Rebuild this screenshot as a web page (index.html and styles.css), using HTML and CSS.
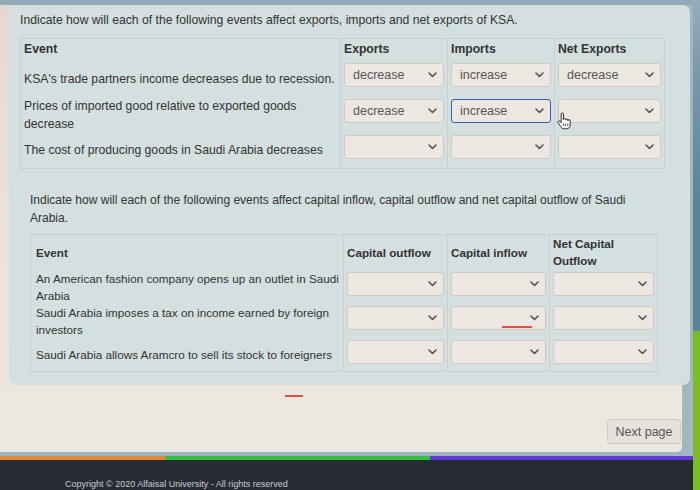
FILE: index.html
```html
<!DOCTYPE html>
<html>
<head>
<meta charset="utf-8">
<link rel="stylesheet" href="styles.css">
</head>
<body>
<div class="screen">
  <div class="main">
    <div class="topbar"></div>
    <div class="content">
      <div class="panel">
        <p class="q q1">Indicate how will each of the following events affect exports, imports and net exports of KSA.</p>
        <table class="grid g1">
          <colgroup><col class="c-ev1"><col class="c-a1"><col class="c-b1"><col class="c-c1"></colgroup>
          <thead>
            <tr><th>Event</th><th>Exports</th><th>Imports</th><th>Net Exports</th></tr>
          </thead>
          <tbody>
            <tr>
              <td class="ev nowrap">KSA's trade partners income decreases due to recession.</td>
              <td class="ch"><div class="sel"><span>decrease</span><svg class="chev" width="9" height="6" viewBox="0 0 9 6"><polyline points="1,1 4.5,4.5 8,1"/></svg></div></td>
              <td class="ch"><div class="sel"><span>increase</span><svg class="chev" width="9" height="6" viewBox="0 0 9 6"><polyline points="1,1 4.5,4.5 8,1"/></svg></div></td>
              <td class="ch"><div class="sel"><span>decrease</span><svg class="chev" width="9" height="6" viewBox="0 0 9 6"><polyline points="1,1 4.5,4.5 8,1"/></svg></div></td>
            </tr>
            <tr>
              <td class="ev">Prices of imported good relative to exported goods decrease</td>
              <td class="ch"><div class="sel"><span>decrease</span><svg class="chev" width="9" height="6" viewBox="0 0 9 6"><polyline points="1,1 4.5,4.5 8,1"/></svg></div></td>
              <td class="ch"><div class="sel focus"><span>increase</span><svg class="chev" width="9" height="6" viewBox="0 0 9 6"><polyline points="1,1 4.5,4.5 8,1"/></svg></div></td>
              <td class="ch"><div class="sel"><span></span><svg class="chev" width="9" height="6" viewBox="0 0 9 6"><polyline points="1,1 4.5,4.5 8,1"/></svg></div></td>
            </tr>
            <tr>
              <td class="ev nowrap">The cost of producing goods in Saudi Arabia decreases</td>
              <td class="ch"><div class="sel"><span></span><svg class="chev" width="9" height="6" viewBox="0 0 9 6"><polyline points="1,1 4.5,4.5 8,1"/></svg></div></td>
              <td class="ch"><div class="sel"><span></span><svg class="chev" width="9" height="6" viewBox="0 0 9 6"><polyline points="1,1 4.5,4.5 8,1"/></svg></div></td>
              <td class="ch"><div class="sel"><span></span><svg class="chev" width="9" height="6" viewBox="0 0 9 6"><polyline points="1,1 4.5,4.5 8,1"/></svg></div></td>
            </tr>
          </tbody>
        </table>

        <p class="q q2">Indicate how will each of the following events affect capital inflow, capital outflow and net capital outflow of Saudi Arabia.</p>
        <table class="grid g2">
          <colgroup><col class="c-ev2"><col class="c-a2"><col class="c-b2"><col class="c-c2"></colgroup>
          <thead>
            <tr><th>Event</th><th>Capital outflow</th><th>Capital inflow</th><th>Net Capital Outflow</th></tr>
          </thead>
          <tbody>
            <tr>
              <td class="ev">An American fashion company opens up an outlet in Saudi Arabia</td>
              <td class="ch"><div class="sel"><span></span><svg class="chev" width="9" height="6" viewBox="0 0 9 6"><polyline points="1,1 4.5,4.5 8,1"/></svg></div></td>
              <td class="ch"><div class="sel"><span></span><svg class="chev" width="9" height="6" viewBox="0 0 9 6"><polyline points="1,1 4.5,4.5 8,1"/></svg></div></td>
              <td class="ch"><div class="sel"><span></span><svg class="chev" width="9" height="6" viewBox="0 0 9 6"><polyline points="1,1 4.5,4.5 8,1"/></svg></div></td>
            </tr>
            <tr>
              <td class="ev">Saudi Arabia imposes a tax on income earned by foreign investors</td>
              <td class="ch"><div class="sel"><span></span><svg class="chev" width="9" height="6" viewBox="0 0 9 6"><polyline points="1,1 4.5,4.5 8,1"/></svg></div></td>
              <td class="ch"><div class="sel"><span></span><svg class="chev" width="9" height="6" viewBox="0 0 9 6"><polyline points="1,1 4.5,4.5 8,1"/></svg><i class="redline"></i></div></td>
              <td class="ch"><div class="sel"><span></span><svg class="chev" width="9" height="6" viewBox="0 0 9 6"><polyline points="1,1 4.5,4.5 8,1"/></svg></div></td>
            </tr>
            <tr>
              <td class="ev nowrap">Saudi Arabia allows Aramcro to sell its stock to foreigners</td>
              <td class="ch"><div class="sel"><span></span><svg class="chev" width="9" height="6" viewBox="0 0 9 6"><polyline points="1,1 4.5,4.5 8,1"/></svg></div></td>
              <td class="ch"><div class="sel"><span></span><svg class="chev" width="9" height="6" viewBox="0 0 9 6"><polyline points="1,1 4.5,4.5 8,1"/></svg></div></td>
              <td class="ch"><div class="sel"><span></span><svg class="chev" width="9" height="6" viewBox="0 0 9 6"><polyline points="1,1 4.5,4.5 8,1"/></svg></div></td>
            </tr>
          </tbody>
        </table>

        <svg class="hand" width="15" height="18" viewBox="0 0 16 19">
          <path d="M5.5 2 a1.2 1.2 0 0 1 2.4 0 V8 a1.2 1.2 0 0 1 2.4 0 v0.6 a1.2 1.2 0 0 1 2.4 0 v0.6 a1.2 1.2 0 0 1 2.4 0 V13.5 c0 2.6 -1.5 4.3 -4 4.3 H8.6 c-1.5 0 -2.5 -0.8 -3.3 -2 L2.2 11.1 a1.2 1.2 0 0 1 2 -1.3 L5.5 11.4 Z" fill="#fff" stroke="#222" stroke-width="1"/>
          <path d="M8 12 v3 M10.3 12 v3 M12.6 12 v3" stroke="#222" stroke-width="0.8"/>
        </svg>
      </div>
      <div class="after">
        <span class="redmark"></span>
        <div class="nav"><button class="next">Next page</button></div>
      </div>
    </div>
    <div class="gap"></div>
    <div class="strip"><span class="s1"></span><span class="s2"></span><span class="s3"></span></div>
    <footer class="footer"><span>Copyright © 2020 Alfaisal University - All rights reserved</span></footer>
  </div>
  <div class="edge"></div>
</div>
</body>
</html>
```

FILE: styles.css
```css
* { box-sizing: border-box; }
body {
  margin: 0;
  background: #9db3bf;
  font-family: "Liberation Sans", Arial, sans-serif;
}
.screen {
  width: 700px;
  height: 490px;
  display: grid;
  grid-template-columns: 693px 7px;
  overflow: hidden;
}
.main {
  display: flex;
  flex-direction: column;
  background: #a0b6c2;
}
.topbar {
  height: 5px;
  flex: none;
  background: #93a8b9;
}
.content {
  width: 682px;
  height: 447px;
  flex: none;
  background: linear-gradient(to bottom, #e4d9ce 0, #e9e2d9 200px, #ede8e1 100%);
  border-bottom-right-radius: 5px;
  display: flex;
  flex-direction: column;
}
.panel {
  position: relative;
  margin-left: 9px;
  width: 681px;
  flex: none;
  background: #d4dfe0;
  border-radius: 7px;
  padding: 6px 0 13px;
}
.q {
  margin: 0;
  font-size: 12.2px;
  line-height: 18px;
  color: #333;
}
.q1 { margin-left: 11px; }
.q2 { margin: 22px 0 0 21px; width: 615px; font-size: 12px; }

.grid {
  border-collapse: collapse;
  table-layout: fixed;
  border: 1px solid #c6d0d0;
  color: #333;
  font-size: 12.2px;
}
.grid th, .grid td {
  border-left: 1px solid #c6d0d0;
  border-right: 1px solid #c6d0d0;
  padding: 0 3px;
  text-align: left;
}
.grid th {
  font-weight: bold;
  line-height: 17px;
  vertical-align: middle;
}
.g1 { margin: 9px 0 0 11px; width: 644px; }
.g1 thead tr { height: 22px; }
.g1 tbody tr { height: 36px; }
.g1 .ev { line-height: 18px; }
.c-ev1 { width: 320px; }
.c-a1 { width: 107px; }
.c-b1 { width: 107px; }
.c-c1 { width: 110px; }

.g2 { margin: 7px 0 0 21px; width: 627px; font-size: 11.7px; }
.g2 thead tr { height: 35px; }
.g2 tbody tr { height: 34px; }
.g2 .ev, .g2 th:first-child { padding-left: 5px; }
.c-ev2 { width: 313px; }
.c-a2 { width: 104px; }
.c-b2 { width: 102px; }
.c-c2 { width: 108px; }

.ev {
  vertical-align: middle;
  line-height: 17px;
}
.nowrap { white-space: nowrap; }
.ch {
  vertical-align: top;
  padding-top: 2px !important;
}
.sel {
  position: relative;
  display: flex;
  align-items: center;
  justify-content: space-between;
  height: 24px;
  background: #ece8e1;
  border: 1px solid #cfcbc4;
  border-radius: 3px;
  padding: 0 6px 0 8px;
  font-size: 12.5px;
  color: #555;
}
.sel.focus {
  border: 1.5px solid #3b5cae;
}
.chev {
  fill: none;
  stroke: #555;
  stroke-width: 1.6;
  stroke-linecap: round;
  stroke-linejoin: round;
}
.redline {
  position: absolute;
  left: 50px;
  bottom: 1px;
  width: 30px;
  height: 2px;
  background: #d9534f;
}
.hand {
  position: absolute;
  left: 547px;
  top: 107px;
}

.after {
  flex: 1;
  display: flex;
  flex-direction: column;
}
.redmark {
  display: block;
  margin: 10px 0 0 285px;
  width: 18px;
  height: 2px;
  background: #d9534f;
}
.nav {
  display: flex;
  justify-content: flex-end;
  margin-top: 22px;
  padding-right: 1px;
}
.next {
  width: 74px;
  height: 25px;
  font-family: "Liberation Sans", Arial, sans-serif;
  font-size: 12.5px;
  color: #555;
  background: #e6e1da;
  border: 1px solid #cdc8c1;
  border-radius: 4px;
  padding: 0;
}
.gap { height: 4px; flex: none; }
.strip {
  height: 4px;
  flex: none;
  display: flex;
}
.s1 { width: 165px; background: #e58a34; }
.s2 { width: 265px; background: #32c23c; }
.s3 { flex: 1; background: #6437e0; }
.footer {
  flex: 1;
  background: #272b34;
  border-bottom: 5px solid #77c01f;
  overflow: hidden;
  padding: 18px 0 0 65px;
  font-size: 9px;
  line-height: 12px;
  color: #c8ccd3;
}
.edge {
  background: linear-gradient(to bottom, #95abbb 0, #7898aa 80px, #5d8496 200px, #5d8496 330px, #77c01f 332px, #77c01f 100%);
}
```
